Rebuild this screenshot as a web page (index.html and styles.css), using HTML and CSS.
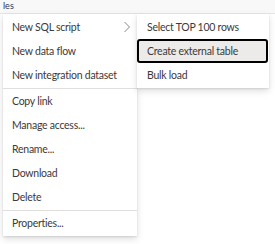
FILE: index.html
```html
<!DOCTYPE html>
<html>
<head>
<meta charset="utf-8">
<link rel="stylesheet" href="styles.css">
</head>
<body>
<div class="page">
  <div class="bg-row"><span class="bg-text">les</span></div>
</div>
<div class="menu main">
  <div class="item"><span>New SQL script</span>
    <svg class="chev" width="8" height="12" viewBox="0 0 8 12"><polyline points="1.5,1 6.5,6 1.5,11" fill="none" stroke="#8a8886" stroke-width="1"/></svg>
  </div>
  <div class="item">New data flow</div>
  <div class="item">New integration dataset</div>
  <div class="divider"></div>
  <div class="item">Copy link</div>
  <div class="item">Manage access...</div>
  <div class="item">Rename...</div>
  <div class="item">Download</div>
  <div class="item">Delete</div>
  <div class="divider"></div>
  <div class="item">Properties...</div>
</div>
<div class="menu sub">
  <div class="item">Select TOP 100 rows</div>
  <div class="item focus">Create external table</div>
  <div class="item">Bulk load</div>
</div>
</body>
</html>
```
FILE: styles.css
```css
html, body {
  margin: 0;
  padding: 0;
  background: #fff;
  font-family: Lato, "Noto Sans", sans-serif;
  color: #3b3a39;
}
.page {
  width: 275px;
  height: 244px;
  overflow: hidden;
  background: #fff;
}
.bg-row {
  height: 13px;
  background: #f8f8f8;
  border-bottom: 1px solid #e6e6e6;
  overflow: hidden;
}
.bg-text {
  display: block;
  padding-left: 3px;
  font-size: 9px;
  line-height: 12px;
  color: #2b3a55;
}
.menu {
  position: absolute;
  background: #fff;
  box-shadow: 0 3.2px 7.2px rgba(0,0,0,0.13), 0 0.6px 1.8px rgba(0,0,0,0.11);
  display: flex;
  flex-direction: column;
  padding: 1px 0;
}
.main {
  left: 3px;
  top: 14px;
  width: 134px;
}
.sub {
  left: 137px;
  top: 14px;
  width: 132px;
}
.item {
  height: 24px;
  display: flex;
  align-items: center;
  justify-content: space-between;
  font-size: 10.5px;
  letter-spacing: -0.25px;
  white-space: nowrap;
  box-sizing: border-box;
}
.main .item {
  padding: 0 6px 0 9px;
}
.sub .item {
  padding: 0 10px;
}
.sub .item.focus {
  background: #edebe9;
  border: 2px solid #000;
  border-radius: 3px;
  padding-left: 8px;
  margin: 0 1px 0 0;
}
.chev {
  display: block;
}
.divider {
  height: 1px;
  background: #e1dfdd;
  margin: 1px 0 0;
}
```
